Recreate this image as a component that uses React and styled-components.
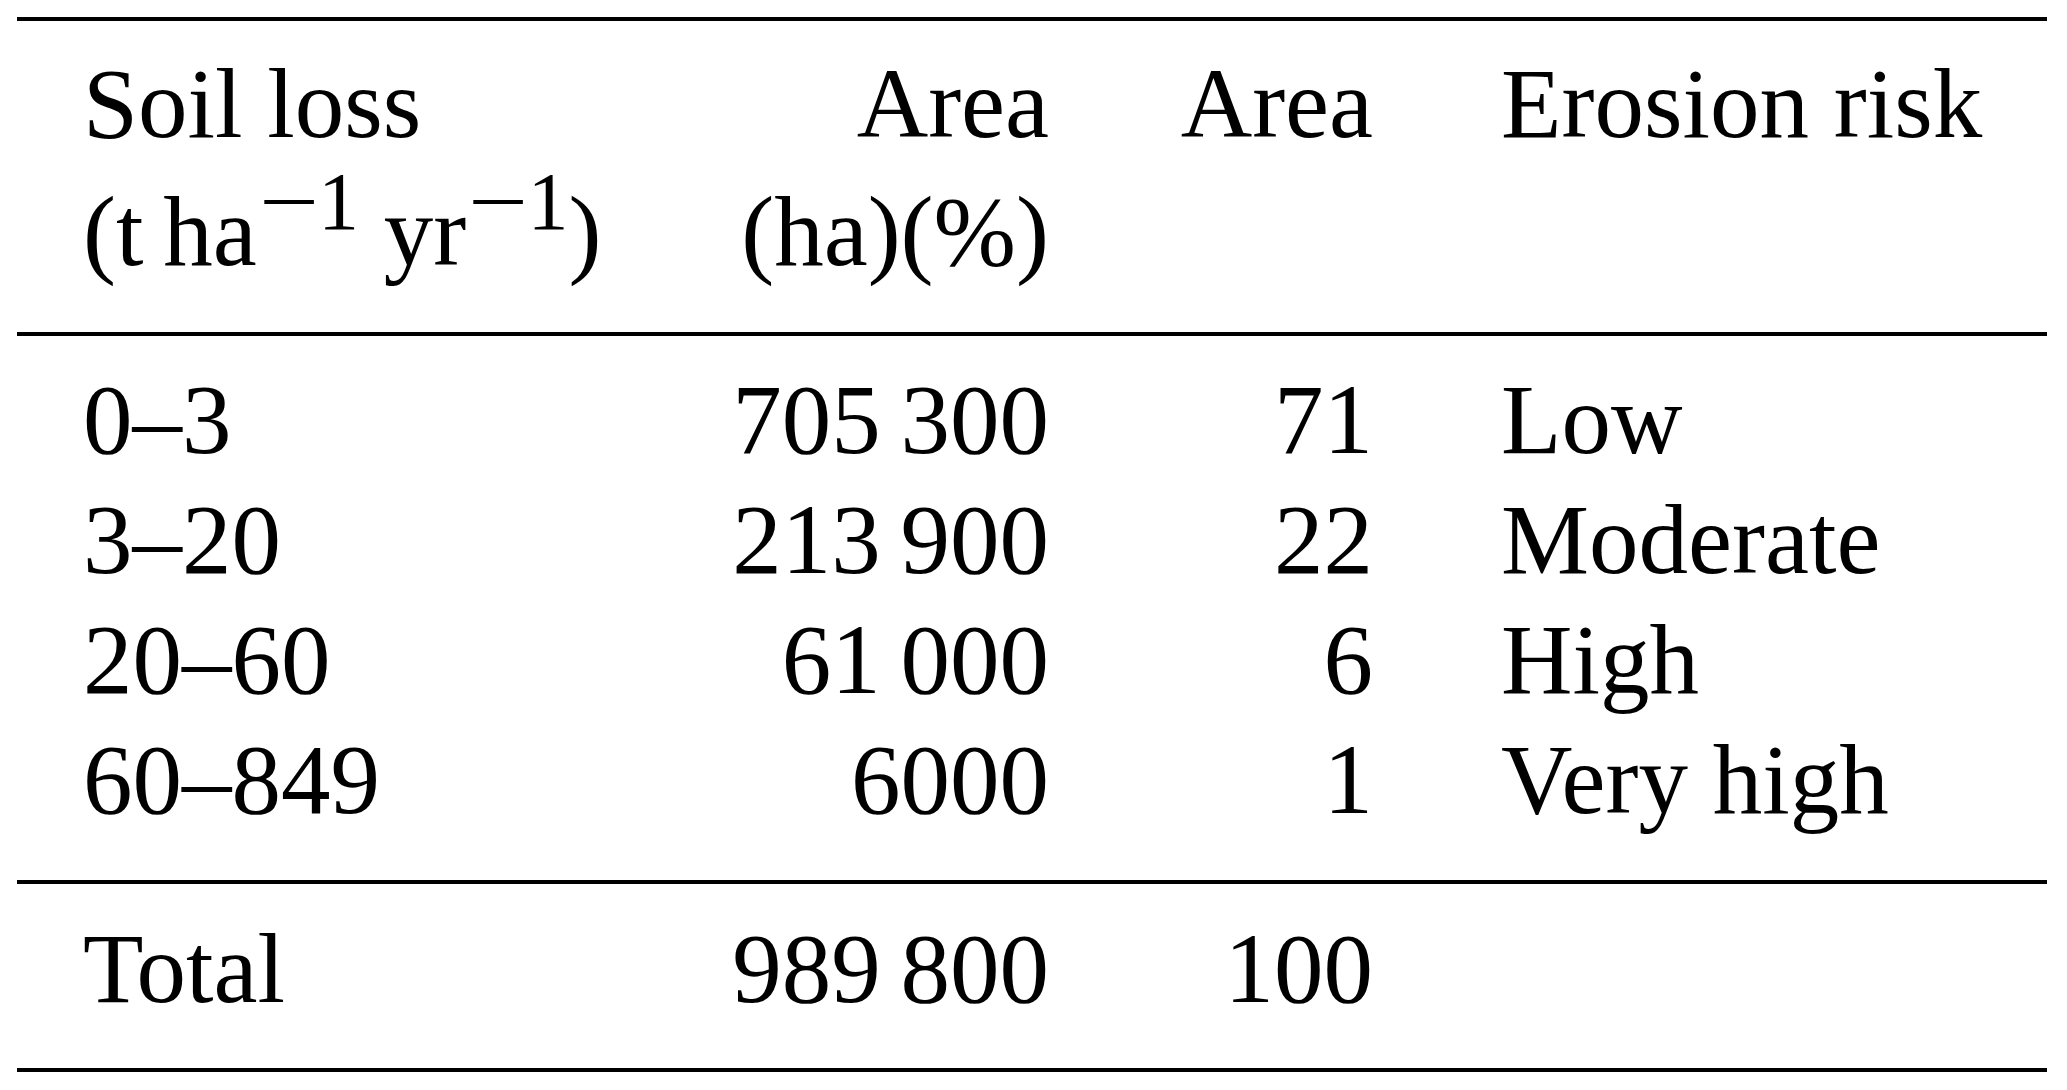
import React from 'react'
import styled, { createGlobalStyle } from 'styled-components'

const GlobalStyle = createGlobalStyle`
  html, body {
    margin: 0;
    padding: 0;
    background: #fff;
  }
  body {
    font-family: "Liberation Serif", "Times New Roman", serif;
    color: #000;
  }
`

const rows = [
  { loss: '0–3', ha: '705\u2009300', pct: '71', risk: 'Low' },
  { loss: '3–20', ha: '213\u2009900', pct: '22', risk: 'Moderate' },
  { loss: '20–60', ha: '61\u2009000', pct: '6', risk: 'High' },
  { loss: '60–849', ha: '6000', pct: '1', risk: 'Very high' },
]

// superscript "−1" as TeX sets it: a wide minus, then the digit
const Power = () => (
  <Sup>
    <Minus>−</Minus>1
  </Sup>
)

const App = () => {
  return (
    <>
      <GlobalStyle />
      <Page>
        <StyledTable>
          <Section $top="19px" $bottom="36px" $lineHeight="128px">
            <Cell>
              Soil loss<br />
              (t{'\u2009'}ha<Power /> yr<Power />)
            </Cell>
            <Cell $align="right">
              Area<br />
              (ha)(%)
            </Cell>
            <Cell $align="right">Area</Cell>
            <Cell $last>Erosion risk</Cell>
          </Section>

          <Section $top="24px" $bottom="40px" $lineHeight="120px">
            {rows.map((row) => (
              <React.Fragment key={row.loss}>
                <Cell>{row.loss}</Cell>
                <Cell $align="right">{row.ha}</Cell>
                <Cell $align="right">{row.pct}</Cell>
                <Cell $last>{row.risk}</Cell>
              </React.Fragment>
            ))}
          </Section>

          <Section $top="25px" $bottom="39px" $lineHeight="120px">
            <Cell>Total</Cell>
            <Cell $align="right">989{'\u2009'}800</Cell>
            <Cell $align="right">100</Cell>
            <Cell $last></Cell>
          </Section>
        </StyledTable>
      </Page>
    </>
  )
}

const Page = styled.div`
  padding: 17px 20px 17px 17px;
`

const StyledTable = styled.div`
  width: 2030px;
  border-top: 4px solid #000;
  font-size: 99px;
`

const Section = styled.div`
  display: grid;
  grid-template-columns: 620px 346px 324px 1fr;
  padding: ${(p) => p.$top} 0 ${(p) => p.$bottom} 66px;
  line-height: ${(p) => p.$lineHeight};
  border-bottom: 4px solid #000;
`

const Cell = styled.div`
  text-align: ${(p) => p.$align || 'left'};
  padding-left: ${(p) => (p.$last ? '128px' : '0')};
  white-space: nowrap;
`

const Sup = styled.span`
  font-size: 82px;
  line-height: 0;
  vertical-align: 36px;
  padding-left: 2px;
`

const Minus = styled.span`
  display: inline-block;
  transform: scaleX(1.3);
  transform-origin: left center;
  margin-right: 13px;
`

export default App
